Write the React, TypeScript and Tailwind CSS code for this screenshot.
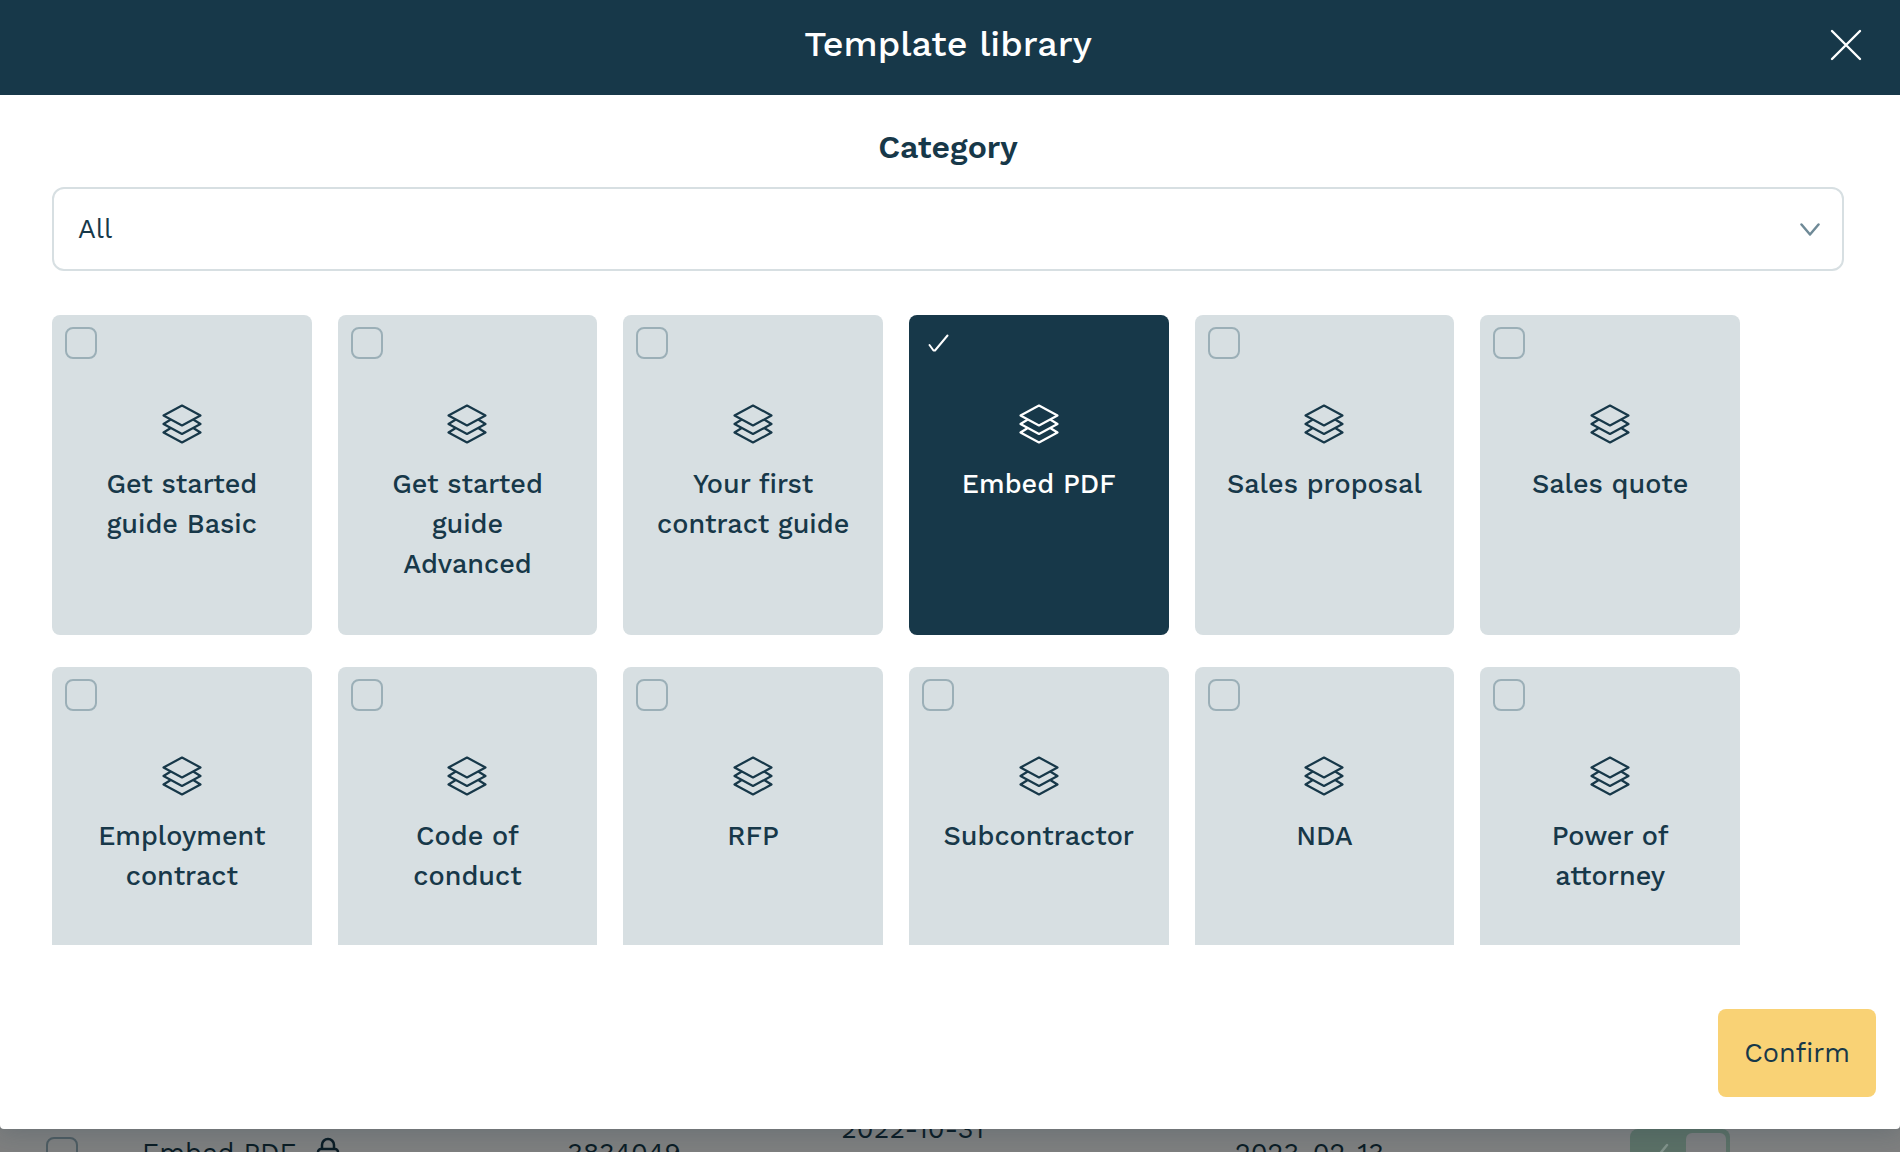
import { useState } from "react";

const templates = [
  "Get started guide Basic",
  "Get started guide Advanced",
  "Your first contract guide",
  "Embed PDF",
  "Sales proposal",
  "Sales quote",
  "Employment contract",
  "Code of conduct",
  "RFP",
  "Subcontractor",
  "NDA",
  "Power of attorney",
];

function LayersIcon() {
  return (
    <svg viewBox="0 0 40 40" className="size-10" fill="none" stroke="currentColor" strokeWidth="2.2" strokeLinejoin="round" strokeLinecap="round" aria-hidden="true">
      <path d="M20 1.5 38.5 11.5 20 21.5 1.5 11.5Z" />
      <path d="M8 16 1.5 20 20 30 38.5 20 32 16" />
      <path d="M8 24.5 1.5 28.5 20 38.5 38.5 28.5 32 24.5" />
    </svg>
  );
}

function TemplateCard({ name, checked, onToggle }: { name: string; checked: boolean; onToggle: () => void }) {
  return (
    <label
      className={
        checked
          ? "relative flex h-80 cursor-pointer flex-col items-center rounded-lg bg-[#173849] px-7 pt-[89px] text-center text-white"
          : "relative flex h-80 cursor-pointer flex-col items-center rounded-lg bg-[#d7dfe2] px-7 pt-[89px] text-center text-[#173849]"
      }
    >
      <input
        type="checkbox"
        checked={checked}
        onChange={onToggle}
        className="absolute top-3 left-[13px] size-8 appearance-none rounded-lg border-2 border-[#9bafb7] checked:border-transparent"
      />
      {checked && (
        <svg viewBox="0 0 32 32" className="pointer-events-none absolute top-3 left-[13px] size-8" fill="none" stroke="currentColor" strokeWidth="2" strokeLinecap="round" strokeLinejoin="round" aria-hidden="true">
          <path d="M7.5 18 11.5 23.5H13L25.5 8.5" />
        </svg>
      )}
      <LayersIcon />
      <span className="mt-5 text-[27px] leading-10 font-medium">{name}</span>
    </label>
  );
}

export default function App() {
  const [selected, setSelected] = useState<string[]>(["Embed PDF"]);
  const toggle = (name: string) =>
    setSelected((s) => (s.includes(name) ? s.filter((n) => n !== name) : [...s, name]));

  return (
    <div className="h-screen overflow-hidden bg-[#7e7f7f] font-['Work_Sans','Inter',sans-serif] text-[#173849]">
      <div role="dialog" aria-labelledby="title" className="relative z-10 overflow-hidden rounded-b bg-white shadow-[0_4px_24px_rgba(23,56,73,0.2)]">
        <header className="relative flex h-[95px] items-center justify-center bg-[#173849] pr-1 pb-2 text-white">
          <h1 id="title" className="text-4xl font-medium">Template library</h1>
          <button type="button" aria-label="Close" className="absolute top-[29px] right-[38px]">
            <svg viewBox="0 0 32 32" className="size-8" fill="none" stroke="currentColor" strokeWidth="2.4" strokeLinecap="round" aria-hidden="true">
              <path d="M2 2 30 30M30 2 2 30" />
            </svg>
          </button>
        </header>
        <main className="pr-14 pl-[52px]">
          <label htmlFor="category" className="block pt-8 text-center text-[32px] leading-10 font-semibold">
            Category
          </label>
          <div className="relative mt-5">
            <select id="category" className="block h-[84px] w-full appearance-none rounded-xl border-2 border-[#d7dfe2] bg-white px-6 text-[27px]">
              <option>All</option>
            </select>
            <svg viewBox="0 0 20 14" className="pointer-events-none absolute top-9 right-6 h-3.5 w-5" fill="none" stroke="#6f8a97" strokeWidth="2.5" strokeLinecap="round" strokeLinejoin="round" aria-hidden="true">
              <path d="M1.5 1.5 10 11.5 18.5 1.5" />
            </svg>
          </div>
          <div className="mt-11 h-[630px] overflow-hidden pr-[104px]">
            <div className="grid grid-cols-6 gap-x-[26px] gap-y-8">
              {templates.map((name) => (
                <TemplateCard key={name} name={name} checked={selected.includes(name)} onToggle={() => toggle(name)} />
              ))}
            </div>
          </div>
        </main>
        <footer className="flex justify-end px-6 pt-16 pb-8">
          <button type="button" className="h-[88px] rounded-lg bg-[#f9d275] px-[26px] text-[27px]">
            Confirm
          </button>
        </footer>
      </div>

      <table aria-label="Contracts" className="-mt-7 w-full table-fixed text-[27px] leading-10 text-[#0b1c25]">
        <tbody>
          <tr className="h-[104px]">
            <td className="w-[142px] pl-[46px]">
              <input type="checkbox" aria-label="Select Embed PDF" className="block size-8 appearance-none rounded-lg border-2 border-[#4e5c62]" />
            </td>
            <td className="w-[425px]">
              <span className="flex items-center gap-5">
                Embed PDF
                <svg viewBox="0 0 24 32" className="h-8 w-6" fill="none" stroke="currentColor" strokeWidth="2.5" aria-hidden="true">
                  <path d="M6 12V8a6 6 0 0 1 12 0V12" />
                  <rect x="2" y="12" width="20" height="17" rx="3" />
                </svg>
              </span>
            </td>
            <td className="w-[274px]">3834049</td>
            <td className="w-[394px] pt-2 align-top">2022-10-31</td>
            <td className="w-[395px]">2023-02-13</td>
            <td>
              <button type="button" role="switch" aria-checked="true" aria-label="Active" className="flex h-12 w-[100px] items-center justify-end rounded-lg bg-[#5b7066] p-1">
                <svg viewBox="0 0 32 32" className="mr-3 size-8" fill="none" stroke="#82938b" strokeWidth="2.5" strokeLinecap="round" strokeLinejoin="round" aria-hidden="true">
                  <path d="M7 19 12 24 25 8" />
                </svg>
                <span className="h-10 w-10 rounded-md bg-[#7c7d7e]" />
              </button>
            </td>
          </tr>
        </tbody>
      </table>
    </div>
  );
}
